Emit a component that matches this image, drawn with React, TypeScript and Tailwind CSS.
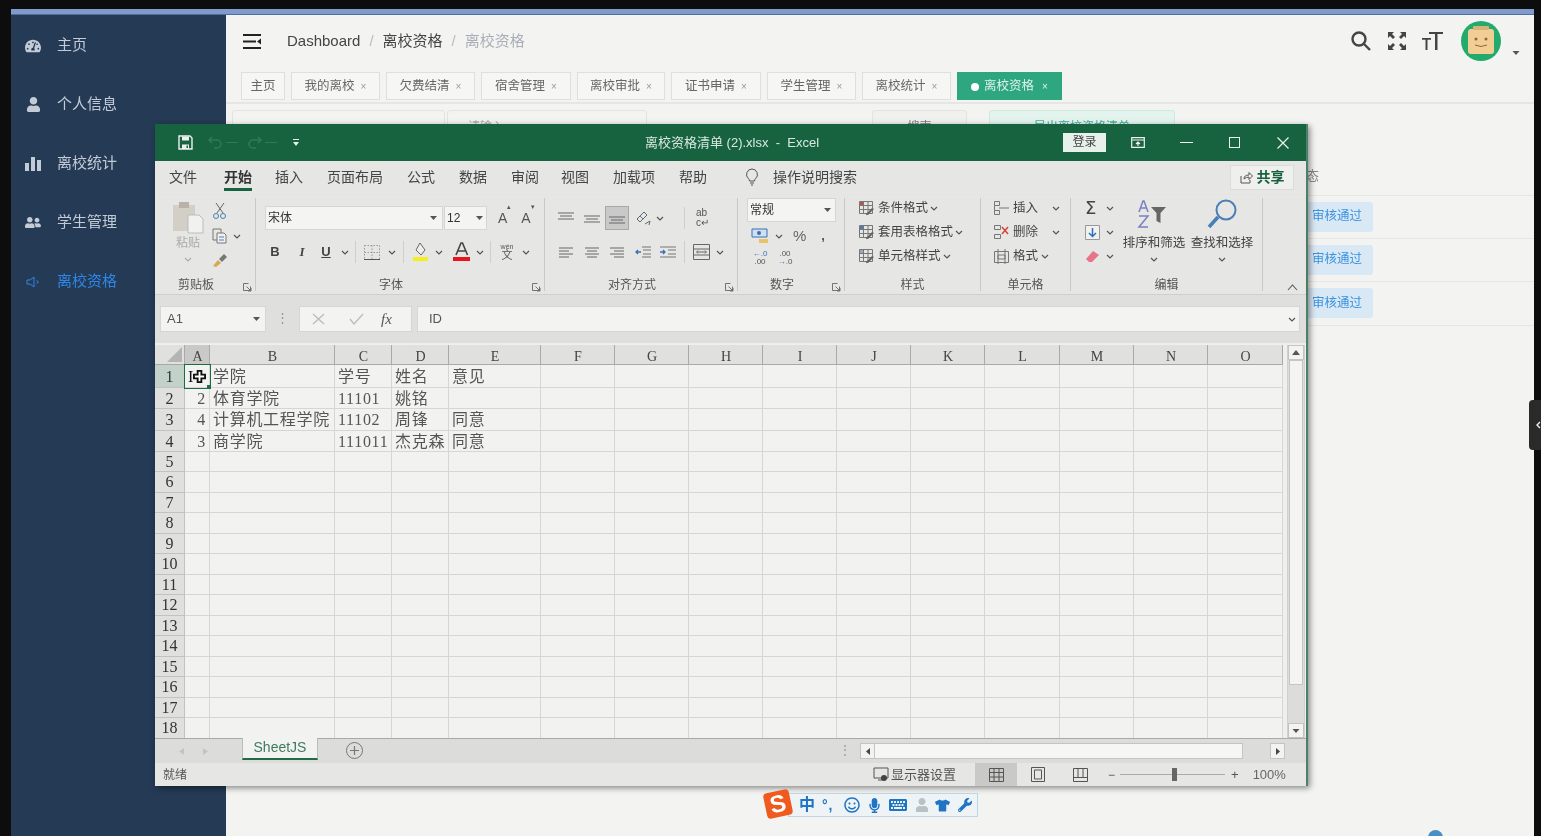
import React from 'react';
import { FaTachometerAlt, FaUser, FaUserFriends, FaMicrophone, FaKeyboard, FaTshirt, FaWrench, FaRegSmile } from 'react-icons/fa';

const Chev = ({ className = '' }: { className?: string }) => (
  <svg width="8" height="5" viewBox="0 0 8 5" className={`shrink-0 ${className}`} fill="none" stroke="#555" strokeWidth="1.2"><path d="M1 1l3 3 3-3" /></svg>
);
const Caret = ({ className = '' }: { className?: string }) => (
  <svg width="7" height="4" viewBox="0 0 7 4" className={`shrink-0 ${className}`} fill="#555"><path d="M0 0h7L3.5 4z" /></svg>
);
const Ic = ({ w = 16, h = 16, children, className = '' }: { w?: number; h?: number; children: React.ReactNode; className?: string }) => (
  <svg width={w} height={h} viewBox={`0 0 ${w} ${h}`} fill="none" className={`shrink-0 ${className}`}>{children}</svg>
);
const Launcher = () => (
  <Ic w={9} h={9}><path d="M.5 .5h5M.5 .5v7h7v-4M3.5 3.5l4 4M8 5v3H5" stroke="#666" strokeWidth=".9" /></Ic>
);
const Lines = ({ ys, xs }: { ys: number[]; xs: [number, number][] }) => (
  <Ic w={16} h={14}>
    {ys.map((y, i) => <path key={i} d={`M${xs[i][0]} ${y}H${xs[i][1]}`} stroke="#666" strokeWidth="1" />)}
  </Ic>
);
const VSep = () => <div className="w-px h-[22px] bg-[#cfcfcf] shrink-0" />;

const nav = [
  { t: '主页', i: <FaTachometerAlt size={16} /> },
  { t: '个人信息', i: <FaUser size={15} /> },
  {
    t: '离校统计',
    i: <svg width="16" height="16" viewBox="0 0 16 16" fill="currentColor"><path d="M0 7h4v8H0zM6 1h4v14H6zM12 4h4v11h-4z" /></svg>,
  },
  { t: '学生管理', i: <FaUserFriends size={17} /> },
  {
    t: '离校资格',
    i: <svg width="14" height="14" viewBox="0 0 14 14" fill="none" stroke="currentColor"><path d="M1 5h3l4-3v10L4 9H1zM10.500 5.500l2 1.500-2 1.500" /></svg>,
    active: true,
  },
];
const tags: [string, string][] = [
  ['主页', 'w-[44px]'], ['我的离校', 'w-[89px]'], ['欠费结清', 'w-[89px]'], ['宿舍管理', 'w-[90px]'], ['离校审批', 'w-[88px]'],
  ['证书申请', 'w-[90px]'], ['学生管理', 'w-[89px]'], ['离校统计', 'w-[89px]'],
];
const tabs = ['文件', '开始', '插入', '页面布局', '公式', '数据', '审阅', '视图', '加载项', '帮助'];
const cols = ['A', 'B', 'C', 'D', 'E', 'F', 'G', 'H', 'I', 'J', 'K', 'L', 'M', 'N', 'O'];
const cells: Record<string, string> = {
  A1: 'I', B1: '学院', C1: '学号', D1: '姓名', E1: '意见',
  A2: '2', B2: '体育学院', C2: '11101', D2: '姚铭',
  A3: '4', B3: '计算机工程学院', C3: '11102', D3: '周锋', E3: '同意',
  A4: '3', B4: '商学院', C4: '111011', D4: '杰克森', E4: '同意',
};
const rows = Array.from({ length: 18 }, (_, i) => i + 1);

const Group = ({ w, label, launcher, children }: { w: string; label: string; launcher?: boolean; children: React.ReactNode }) => (
  <div className={`${w} shrink-0 flex flex-col border-r border-[#c9c9c9]`}>
    <div className="h-[79px] shrink-0">{children}</div>
    <div className={`h-[15px] flex items-center text-[12px] text-[#555] relative ${launcher ? 'pr-[18px]' : ''}`}>
      <span className="flex-1 text-center">{label}</span>
      {launcher && <span className="absolute right-[3px] top-[6px]"><Launcher /></span>}
    </div>
  </div>
);

const SmallTable = ({ c = '#4a7fb5' }: { c?: string }) => (
  <Ic w={17} h={16}>
    <path d="M1.500 1.500h13v12h-13zM1.500 5.500h13M1.500 9.500h13M5.500 1.500v12M10 1.500v12" stroke="#777" />
    <path d="M2 2h3v3H2z" fill={c} />
    <path d="M8 14l6-6 2 1-6 6H8z" fill="#666" />
  </Ic>
);

export default function App() {
  return (
    <div className="w-[1541px] h-[836px] bg-[#0d0d0d] flex flex-col relative overflow-hidden font-['Liberation_Sans','Noto_Sans_CJK_SC',sans-serif] blur-[0.5px]">
      <div className="h-[9px] shrink-0" />
      <div className="flex-1 min-h-0 pl-[11px] pr-[7px] flex flex-col">
        <div className="h-[6px] shrink-0 bg-[#7f9acb] border-b border-[#4f6f9f]" />
        <div className="flex-1 min-h-0 flex">
          {/* sidebar */}
          <aside className="w-[215px] shrink-0 bg-[#243a55] flex flex-col pt-[1px]">
            {nav.map(n => (
              <div key={n.t} className={`h-[59px] shrink-0 flex items-center pl-[14px] ${n.active ? 'text-[#2e86e8]' : 'text-[#c3ccd6]'}`}>
                <span className="w-[16px] flex justify-center">{n.i}</span>
                <span className="ml-[16px] text-[15px]">{n.t}</span>
              </div>
            ))}
          </aside>
          {/* main */}
          <main className="flex-1 min-w-0 bg-[#f3f4f2] flex flex-col">
            <header className="h-[55px] shrink-0 flex items-center pl-[17px] pr-[14px]">
              <svg width="18" height="15" viewBox="0 0 18 15" fill="#222" className="shrink-0 -mt-[3px]"><path d="M0 0h18v2H0zM0 6.500h13v2H0zM0 13h18v2H0zM18 4.500v6l-4-3z" /></svg>
              <div className="ml-[26px] -mt-[2px] flex items-center text-[15px] text-[#444]">
                <span>Dashboard</span>
                <span className="mx-[9px] text-[#bbb]">/</span>
                <span>离校资格</span>
                <span className="mx-[9px] text-[#bbb]">/</span>
                <span className="text-[#a9adb8]">离校资格</span>
              </div>
              <div className="ml-auto -mt-[4px] flex items-center text-[#444]">
                <svg width="20" height="20" viewBox="0 0 20 20" fill="none" stroke="#444" strokeWidth="2.400"><circle cx="8" cy="8" r="6.500" /><path d="M13 13l6 6" /></svg>
                <svg width="20" height="20" viewBox="0 0 20 20" fill="#444" className="ml-[16px]"><path d="M1 1h6L5 3l3 3-2 2-3-3-2 2zM19 1v6l-2-2-3 3-2-2 3-3-2-2zM1 19v-6l2 2 3-3 2 2-3 3 2 2zM19 19h-6l2-2-3-3 2-2 3 3 2-2z" /></svg>
                <svg width="21" height="20" viewBox="0 0 21 20" fill="#444" className="ml-[15px]"><path d="M7 1h14v2H15.500V19h-2.500V3H7zM0 7h9v1.800H5.500V19H3.500V8.800H0z" /></svg>
                <svg width="40" height="40" viewBox="0 0 40 40" className="ml-[18px]">
                  <circle cx="20" cy="20" r="20" fill="#22ab6d" />
                  <rect x="7" y="8" width="26" height="25" rx="3" fill="#f2cd94" />
                  <rect x="12" y="5" width="16" height="4" rx="1" fill="#d8b27b" />
                  <circle cx="15" cy="18" r="1.500" fill="#8a6a3a" /><circle cx="25" cy="18" r="1.500" fill="#8a6a3a" />
                  <path d="M14 24q6 3 12 0" stroke="#8a6a3a" fill="none" />
                </svg>
                <Caret className="ml-[11px] mt-[24px] w-[8px]" />
              </div>
            </header>
            <nav className="h-[34px] shrink-0 flex items-start pl-[15px] gap-[6px] pt-[2px] border-b-2 border-[#e6e7e5]">
              {tags.map(([t, w], i) => (
                <div key={t} className={`h-[28px] ${w} flex items-center justify-center gap-[6px] pt-[1px] border border-[#dfe0de] text-[12.5px] text-[#666] bg-[#f6f6f5]`}>
                  <span>{t}</span>
                  {i > 0 && <span className="text-[10px] text-[#999]">×</span>}
                </div>
              ))}
              <div className="h-[28px] w-[105px] flex items-center justify-center pt-[1px] bg-[#2ea67f] text-white text-[12.5px]">
                <span className="w-[8px] h-[8px] rounded-full bg-white mr-[5px]" />
                <span className="text-[#dff2ea]">离校资格</span>
                <span className="ml-[8px] text-[10px] text-[#dff2ea]">×</span>
              </div>
            </nav>
            <section className="flex-1 min-h-0 flex flex-col">
              <div className="h-[40px] shrink-0 pt-[6px] flex items-start text-[12px] text-[#aaa]">
                <div className="ml-[6px] w-[213px] h-[30px] border border-[#e3e4e2] rounded-[3px]" />
                <div className="ml-[2px] w-[200px] h-[30px] border border-[#e3e4e2] rounded-[3px] pl-[20px] pt-[7px]">请输入</div>
                <div className="ml-[225px] w-[95px] h-[30px] border border-[#e3e4e2] rounded-[3px] bg-[#f0f0ef] text-center pt-[7px] text-[#777]">搜索</div>
                <div className="ml-[22px] w-[186px] h-[30px] border border-[#cfe9df] rounded-[3px] bg-[#e3f3ee] text-center pt-[7px] text-[#4a9]">导出离校资格清单</div>
              </div>
              <div className="ml-[1067px]">
                <div className="h-[51px] flex items-end pb-[10px] text-[13px] text-[#888]">状态</div>
              </div>
              {[0, 1, 2].map(i => (
                <div key={i} className={`h-[43.500px] shrink-0 flex items-center pl-[1079px] border-b border-[#e6e7e5] ${i === 0 ? 'border-t' : ''}`}>
                  <span className="w-[68px] h-[30px] rounded-[3px] bg-[#d9e8f5] text-[#3b92e0] text-[12.5px] flex items-center pl-[7px]">审核通过</span>
                </div>
              ))}
            </section>
          </main>
        </div>
      </div>

      {/* side handle + bottom dot */}
      <div className="absolute right-0 top-[400px] w-[12px] h-[50px] rounded-l-[4px] bg-[#2a2a2a] flex items-center justify-end">
        <svg width="6" height="8" viewBox="0 0 6 8" fill="none" stroke="#eee" strokeWidth="1.400"><path d="M5 1L2 4l3 3" /></svg>
      </div>
      <div className="absolute left-[1428px] top-[830px] w-[15px] h-[15px] rounded-full bg-[#4a90c8]" />

      {/* Excel window */}
      <div className="absolute left-[155px] top-[124px] w-[1153px] h-[662px] bg-[#e6e6e5] flex flex-col shadow-[2px_2px_6px_rgba(0,0,0,0.45)] text-[#444] border-r-2 border-b border-[#4d8068]">
        {/* title bar */}
        <div className="h-[37px] shrink-0 bg-[#17633f] flex items-center relative text-[#e6efe9]">
          <Ic w={15} h={15} className="ml-[23px]"><path d="M1 1h11l2 2v11H1z" stroke="#f0f0f0" strokeWidth="1.400" /><path d="M4 1.500h7v4H4zM4 9.500h7V14H4z" fill="#f0f0f0" /><path d="M8.500 10.500h1.500v2.500H8.500z" fill="#17633f" /></Ic>
          <Ic w={15} h={13} className="ml-[15px]"><path d="M4 1L1 4l3 3M1 4h8a4 4 0 010 8H6" stroke="#2f7a57" strokeWidth="1.500" /></Ic>
          <div className="w-[12px] h-px bg-[#2f7a57] ml-[3px]" />
          <Ic w={15} h={13} className="ml-[9px]"><path d="M11 1l3 3-3 3M14 4H6a4 4 0 000 8h3" stroke="#2f7a57" strokeWidth="1.500" /></Ic>
          <div className="w-[12px] h-px bg-[#2f7a57] ml-[3px]" />
          <svg width="6" height="7" viewBox="0 0 6 7" fill="#e6efe9" className="ml-[16px]"><path d="M0 0h6v1H0zM0 3h6L3 7z" /></svg>
          <span className="ml-[346px] text-[13px] whitespace-pre text-[#dbe8e1]">离校资格清单 (2).xlsx  -  Excel</span>
          <button className="ml-[244px] w-[43px] h-[19px] bg-[#e8f0ec] text-[#444] text-[12px] leading-[19px] text-center">登录</button>
          <Ic w={14} h={11} className="ml-[25px]"><path d="M.700 .700h12.600v9.600H.700zM.700 3h12.600M7 9V5M5 7l2-2 2 2" stroke="#f0f0f0" strokeWidth="1.200" /></Ic>
          <div className="ml-[35px] w-[13px] h-px bg-[#f0f0f0]" />
          <div className="ml-[36px] w-[11px] h-[11px] border border-[#f0f0f0]" />
          <Ic w={12} h={12} className="ml-[37px]"><path d="M.5 .5l11 11M11.500 .5l-11 11" stroke="#f0f0f0" strokeWidth="1.200" /></Ic>
        </div>

        {/* tabs */}
        <div className="h-[34px] shrink-0 flex items-center pl-[14px] pb-[2px] text-[14px] bg-[#e6e6e5]">
          <div className="flex gap-[24px]">
            {tabs.map(t => (
              <span key={t} className={`relative ${t === '开始' ? 'font-bold text-[#333] ml-[1px] -mr-[1px]' : ''} ${t === '文件' ? 'mr-[2px]' : ''} ${t === '视图' ? '-ml-[2px]' : ''}`}>
                {t}
                {t === '开始' && <span className="absolute left-0 right-0 -bottom-[3px] h-[3px] bg-[#17633f]" />}
              </span>
            ))}
          </div>
          <Ic w={14} h={18} className="ml-[38px]"><path d="M7 1a5.500 5.500 0 013.500 9.700c-.6.6-1 1.300-1 2.300h-5c0-1-.4-1.700-1-2.300A5.500 5.500 0 017 1zM5 15h4M6 17h2" stroke="#555" /></Ic>
          <span className="ml-[14px]">操作说明搜索</span>
          <div className="ml-auto mr-[12px] w-[64px] h-[25px] bg-[#efefee] border border-[#dcdcdc] flex items-center justify-center">
            <Ic w={13} h={13}><path d="M1 5v7h9V9M4 8q0-4 5-4V1.500L12.500 5 9 8.500V6q-3 0-5 2z" stroke="#555" /></Ic>
            <span className="ml-[4px] font-bold text-[#17633f] text-[14px]">共享</span>
          </div>
        </div>

        {/* ribbon */}
        <div className="h-[100px] shrink-0 flex py-[3px] bg-[#e6e6e5] border-b border-[#cfcfcf] shadow-[0_1px_2px_rgba(0,0,0,0.15)]">
          <Group w="w-[101px]" label="剪贴板" launcher>
            <div className="flex pl-[15px]">
              <div className="w-[36px] flex flex-col items-center pt-[2px]">
                <Ic w={34} h={34}>
                  <path d="M2 5h22v26H2z" fill="#d4cfc6" /><path d="M8 2h10v6H8z" fill="#b8b2a8" />
                  <path d="M17 15h11l4 4v14H17z" fill="#f1f1ef" stroke="#bbb" />
                </Ic>
                <span className="text-[12px] text-[#aaa] leading-[16px] mt-[1px]">粘贴</span>
                <Chev className="mt-[6px] opacity-40" />
              </div>
              <div className="ml-[6px] flex flex-col pt-[5px] gap-[9px]">
                <Ic w={16} h={16}><path d="M4 0l7 10M12 0L5 10" stroke="#666" /><circle cx="4" cy="13" r="2.500" stroke="#4a7fb5" /><circle cx="11" cy="13" r="2.500" stroke="#4a7fb5" /></Ic>
                <div className="flex items-center gap-[5px]">
                  <Ic w={16} h={16}><path d="M1 1h8v11H1z" stroke="#777" /><path d="M5 5h7l2 2v8H5z" fill="#f1f1ef" stroke="#777" /><path d="M7 9h5M7 12h5" stroke="#4a7fb5" /></Ic>
                  <Chev />
                </div>
                <Ic w={16} h={14}><path d="M1 13l5-6 3 3-5 4z" fill="#d9a94f" /><path d="M7 6l5-5 3 3-5 5z" fill="#777" /></Ic>
              </div>
            </div>
          </Group>

          <Group w="w-[289px]" label="字体" launcher>
            <div className="pl-[9px] pt-[8px]">
              <div className="flex items-center">
                <div className="w-[178px] h-[24px] bg-[#f4f4f3] border border-[#d6d6d6] flex items-center pl-[2px] pr-[5px] text-[12px] text-[#333]">
                  <span>宋体</span><Caret className="ml-auto" />
                </div>
                <div className="ml-px w-[43px] h-[24px] bg-[#f4f4f3] border border-[#d6d6d6] flex items-center pl-[2px] pr-[3px] text-[12px] text-[#333]">
                  <span>12</span><Caret className="ml-auto" />
                </div>
                <span className="ml-[11px] text-[14px] text-[#555] relative">A<sup className="text-[7px] absolute -top-[1px] -right-[4px]">▴</sup></span>
                <span className="ml-[14px] text-[14px] text-[#555] relative">A<sup className="text-[7px] absolute -top-[1px] -right-[4px]">▾</sup></span>
              </div>
              <div className="flex items-center mt-[10px] h-[24px]">
                <span className="w-[20px] text-center text-[13px] font-bold text-[#444]">B</span>
                <span className="ml-[7px] w-[20px] text-center text-[13px] italic font-bold font-['Liberation_Serif'] text-[#444]">I</span>
                <span className="ml-[4px] w-[20px] text-center text-[13px] font-bold underline text-[#444]">U</span>
                <Chev className="ml-[5px]" />
                <div className="ml-[6px]"><VSep /></div>
                <Ic w={16} h={15} className="ml-[8px]"><path d="M.5 .5h15v14H.5zM.5 7.500h15M8 .5v14" stroke="#999" strokeDasharray="1.500 1.500" /><path d="M0 14.500h16" stroke="#555" /></Ic>
                <Chev className="ml-[8px]" />
                <div className="ml-[7px]"><VSep /></div>
                <Ic w={17} h={20} className="ml-[8px]"><path d="M8 1l5 7-4 5-5-5z" stroke="#666" fill="#eee" /><path d="M1 15h15v4H1z" fill="#f6ee1e" /></Ic>
                <Chev className="ml-[6px]" />
                <Ic w={17} h={20} className="ml-[10px]"><path d="M3 13L8 1h1.500l5 12M5 9h7" stroke="#444" strokeWidth="1.600" /><path d="M0 15h17v4H0z" fill="#e8141c" /></Ic>
                <Chev className="ml-[6px]" />
                <div className="ml-[6px]"><VSep /></div>
                <span className="ml-[8px] w-[16px] flex flex-col items-center leading-none text-[#555]"><span className="text-[7px]">wén</span><span className="text-[11px]">文</span></span>
                <Chev className="ml-[7px]" />
              </div>
            </div>
          </Group>

          <Group w="w-[193px]" label="对齐方式" launcher>
            <div className="pl-[13px] pt-[8px]">
              <div className="flex items-center h-[24px]">
                <Lines ys={[2, 5, 8]} xs={[[0, 16], [2, 14], [0, 16]]} />
                <span className="ml-[10px]"><Lines ys={[5, 8, 11]} xs={[[0, 16], [2, 14], [0, 16]]} /></span>
                <div className="ml-[5px] w-[24px] h-[24px] bg-[#c9c9c9] border border-[#a8a8a8] flex items-center justify-center"><Lines ys={[6, 9, 12]} xs={[[0, 16], [2, 14], [0, 16]]} /></div>
                <Ic w={16} h={15} className="ml-[7px]"><path d="M1 8l7-7 3 3-7 7zM9 13l5-3-1 4" stroke="#666" /><path d="M4 5l3 3" stroke="#4a7fb5" /></Ic>
                <Chev className="ml-[4px]" />
                <div className="ml-[20px]"><VSep /></div>
                <span className="ml-[11px] text-[10px] leading-[10px] text-[#555] w-[16px]">ab<br />c↵</span>
              </div>
              <div className="flex items-center h-[24px] mt-[10px]">
                <Lines ys={[3, 6, 9, 12]} xs={[[1, 15], [1, 11], [1, 15], [1, 11]]} />
                <span className="ml-[10px]"><Lines ys={[3, 6, 9, 12]} xs={[[1, 15], [3, 13], [1, 15], [3, 13]]} /></span>
                <span className="ml-[9px]"><Lines ys={[3, 6, 9, 12]} xs={[[1, 15], [5, 15], [1, 15], [5, 15]]} /></span>
                <Ic w={16} h={14} className="ml-[10px]"><path d="M7 2h9M7 12h9M8 5h8M8 9h8" stroke="#777" /><path d="M6 7H1M3 5L1 7l2 2" stroke="#3a6fb5" strokeWidth="1.300" /></Ic>
                <Ic w={16} h={14} className="ml-[9px]"><path d="M0 2h16M0 12h16M8 5h8M8 9h8" stroke="#777" /><path d="M0 7h5M3 5l2 2-2 2" stroke="#3a6fb5" strokeWidth="1.300" /></Ic>
                <div className="ml-[8px]"><VSep /></div>
                <Ic w={17} h={16} className="ml-[8px]"><path d="M.5 .5h16v15H.5zM.5 5h16M.5 11h16M4 8h9M5 6.500L3.500 8 5 9.500M12 6.500L13.500 8 12 9.500" stroke="#666" /></Ic>
                <Chev className="ml-[6px]" />
              </div>
            </div>
          </Group>

          <Group w="w-[107px]" label="数字" launcher>
            <div className="pl-[9px]">
              <div className="w-[89px] h-[24px] bg-[#f4f4f3] border border-[#d6d6d6] flex items-center pl-[2px] pr-[4px] text-[12px] text-[#333]">
                <span>常规</span><Caret className="ml-auto" />
              </div>
              <div className="flex items-center h-[24px] mt-[2px] pl-[4px]">
                <Ic w={18} h={16}><path d="M1 1h15v8H1z" fill="#cfe0f0" stroke="#3a6fb5" /><circle cx="8" cy="5" r="2" fill="#3a6fb5" /><path d="M8 11h9v4H8z" fill="#e8c36a" /></Ic>
                <Chev className="ml-[6px]" />
                <span className="ml-[10px] text-[15px] text-[#666]">%</span>
                <span className="ml-[15px] text-[13px] font-bold text-[#555]">,</span>
              </div>
              <div className="flex items-center pl-[4px] mt-[2px] gap-[7px]">
                {['←.0', '.00'].map((a, i) => (
                  <span key={a} className="w-[18px] text-[8px] leading-[8px] text-center text-[#555]">
                    <span className={i === 0 ? 'text-[#3a6fb5]' : ''}>{a}</span><br />{i === 0 ? '.00' : <span><span className="text-[#3a6fb5]">→</span>.0</span>}
                  </span>
                ))}
              </div>
            </div>
          </Group>

          <Group w="w-[136px]" label="样式">
            <div className="pl-[13px] pt-[1px] flex flex-col gap-[6px] text-[12.5px]">
              <div className="h-[18px] flex items-center"><SmallTable c="#c0504d" /><span className="ml-[3px]">条件格式</span><Chev className="ml-[2px]" /></div>
              <div className="h-[18px] flex items-center"><SmallTable /><span className="ml-[3px]">套用表格格式</span><Chev className="ml-[2px]" /></div>
              <div className="h-[18px] flex items-center"><SmallTable c="#9ab" /><span className="ml-[3px]">单元格样式</span><Chev className="ml-[2px]" /></div>
            </div>
          </Group>

          <Group w="w-[90px]" label="单元格">
            <div className="pl-[12px] pt-[1px] flex flex-col gap-[6px] text-[12.5px]">
              <div className="h-[18px] flex items-center w-[67px]"><Ic w={17} h={16}><path d="M1.500 1.500h5v4h-5zM1.500 10.500h5v4h-5zM1.500 5.500v5M6 8h10" stroke="#777" /></Ic><span className="ml-[3px]">插入</span><Chev className="ml-auto" /></div>
              <div className="h-[18px] flex items-center w-[67px]"><Ic w={17} h={16}><path d="M1.500 1.500h6v4h-6zM1.500 10.500h6v4h-6z" stroke="#777" /><path d="M9 3l6 7M15 3l-6 7" stroke="#d9433a" strokeWidth="1.500" /></Ic><span className="ml-[3px]">删除</span><Chev className="ml-auto" /></div>
              <div className="h-[18px] flex items-center"><Ic w={17} h={16}><path d="M1.500 3.500h14v11h-14zM5 1v15M12 1v15M5 7h7v4H5z" stroke="#777" /></Ic><span className="ml-[3px]">格式</span><Chev className="ml-[3px]" /></div>
            </div>
          </Group>

          <Group w="w-[192px]" label="编辑">
            <div className="flex pl-[14px]">
              <div className="w-[37px] flex flex-col gap-[6px] pt-[1px]">
                <div className="h-[18px] flex items-center"><span className="w-[14px] text-[18px] leading-none font-['DejaVu_Sans'] text-[#444]">Σ</span><Chev className="ml-[7px]" /></div>
                <div className="h-[18px] flex items-center"><Ic w={15} h={15}><path d="M.5 .5h14v14H.5z" stroke="#999" fill="#f1f1ef" /><path d="M7.500 3v8M4 8l3.500 3.500L11 8" stroke="#2f6fc0" strokeWidth="1.500" /></Ic><Chev className="ml-[6px]" /></div>
                <div className="h-[18px] flex items-center"><Ic w={15} h={13}><path d="M1 9l7-8 6 4-7 7H4z" fill="#e8748a" /></Ic><Chev className="ml-[6px]" /></div>
              </div>
              <div className="w-[64px] flex flex-col items-center">
                <Ic w={34} h={30}>
                  <path d="M2 14L6 3h1l4 11M4 10h5M2 18h9L2 29h9" stroke="#7a7fc4" strokeWidth="1.500" />
                  <path d="M14 9h15l-5.500 6v10l-4-2v-8z" fill="#666" />
                </Ic>
                <span className="text-[12.500px] leading-[16px] mt-[7px] whitespace-nowrap">排序和筛选</span>
                <Chev className="mt-[6px]" />
              </div>
              <div className="ml-[4px] w-[64px] flex flex-col items-center">
                <Ic w={34} h={32}><circle cx="21" cy="12" r="9.500" stroke="#4a7fb5" strokeWidth="2" /><path d="M13 19L4 29" stroke="#4a7fb5" strokeWidth="3.500" /></Ic>
                <span className="text-[12.500px] leading-[16px] mt-[5px] whitespace-nowrap">查找和选择</span>
                <Chev className="mt-[6px]" />
              </div>
            </div>
          </Group>

          <div className="flex-1 flex items-end justify-end pr-[8px]">
            <svg width="11" height="7" viewBox="0 0 11 7" fill="none" stroke="#555" strokeWidth="1.100"><path d="M1 6l4.500-5L10 6" /></svg>
          </div>
        </div>

        {/* formula bar */}
        <div className="h-[48px] shrink-0 bg-[#dfdfdd] flex items-start pt-[11px] pl-[5px] pr-[6px]">
          <div className="w-[106px] h-[26px] bg-[#f3f3f2] border border-[#d6d6d6] flex items-center pl-[6px] pr-[5px] text-[13px] text-[#555]">
            A1<Caret className="ml-auto" />
          </div>
          <span className="w-[33px] h-[26px] text-center leading-[24px] text-[#999] text-[13px]">⋮</span>
          <div className="w-[113px] h-[26px] bg-[#f3f3f2] border border-[#d6d6d6] flex items-center pl-[12px]">
            <Ic w={14} h={12}><path d="M1 1l11 10M12 1L1 11" stroke="#bbb" strokeWidth="1.300" /></Ic>
            <Ic w={15} h={12} className="ml-[23px]"><path d="M1 6l4 5 9-10" stroke="#bbb" strokeWidth="1.300" /></Ic>
            <span className="ml-[17px] text-[15px] italic font-['Liberation_Serif'] text-[#555]">fx</span>
          </div>
          <div className="ml-[5px] flex-1 h-[26px] bg-[#f3f3f2] border border-[#d6d6d6] flex items-center pl-[11px] pr-[3px] text-[13px] text-[#555]">
            ID<Chev className="ml-auto" />
          </div>
        </div>

        {/* sheet */}
        <div className="h-[395px] shrink-0 flex bg-[#eef0ee] pt-[2px]">
          <div className="grid w-[1128px] grid-cols-[30px_25px_125px_57px_57px_92px_74px_74px_74px_74px_74px_74px_75px_74px_74px_75px] grid-rows-[20px_23px_21px_22px_21px_20px_repeat(13,20.500px)] font-['Liberation_Serif','Noto_Sans_CJK_SC',serif] overflow-hidden">
            <div className="bg-[#e0e0de] border-b border-r border-[#a9a9a9] flex items-end justify-end pr-[2px] pb-[2px]">
              <svg width="15" height="15" viewBox="0 0 15 15" fill="#b4b4b4"><path d="M15 0v15H0z" /></svg>
            </div>
            {cols.map((c, i) => (
              <div key={c} className={`border-b border-r border-[#a9a9a9] flex items-center justify-center pt-[3px] pl-[1px] text-[14px] text-[#444] ${i === 0 ? 'bg-[#c9c9c7]' : 'bg-[#e0e0de]'}`}>{c}</div>
            ))}
            {rows.map(r => (
              <React.Fragment key={r}>
                <div className={`border-b border-r border-[#c2c2c2] flex items-center justify-center pt-[1px] text-[16px] text-[#333] ${r === 1 ? 'bg-[#c2d2c8]' : 'bg-[#e0e0de]'}`}>{r}</div>
                {cols.map((c, i) => {
                  const v = cells[`${c}${r}`];
                  const sel = c === 'A' && r === 1;
                  return (
                    <div
                      key={c}
                      className={`relative border-b border-r border-[#d6d7d5] bg-[#f2f3f1] flex items-center pt-[1px] text-[16px] tracking-[0.7px] whitespace-nowrap px-[3px] ${i === 0 && !sel ? 'justify-end' : ''} ${sel ? 'outline-[1.5px] outline-[#1f6b45] z-10 text-[#111]' : 'text-[#555]'}`}
                    >
                      {v}
                      {sel && (
                        <>
                          <svg width="13" height="13" viewBox="0 0 14 14" className="absolute left-[8px] top-[5px]"><path d="M5 1h4v4h4v4H9v4H5V9H1V5h4z" fill="#fff" stroke="#111" strokeWidth="2" /></svg>
                          <span className="absolute -right-[2px] -bottom-[2px] w-[4px] h-[4px] bg-[#1f6b45]" />
                        </>
                      )}
                    </div>
                  );
                })}
              </React.Fragment>
            ))}
          </div>
          <div className="ml-[4px] w-[18px] flex flex-col bg-[#dcdcda] border-x border-[#d0d0ce]">
            <div className="h-[15px] bg-[#f3f3f2] border border-[#c4c4c4] flex items-center justify-center">
              <svg width="8" height="5" viewBox="0 0 8 5" fill="#555"><path d="M4 0l4 5H0z" /></svg>
            </div>
            <div className="h-[325px] mx-[1px] bg-[#f4f4f3] border border-[#c4c4c4]" />
            <div className="flex-1" />
            <div className="h-[15px] bg-[#f3f3f2] border border-[#c4c4c4] flex items-center justify-center"><Caret className="w-[8px]" /></div>
          </div>
        </div>

        {/* sheet tabs */}
        <div className="h-[25px] shrink-0 bg-[#dcdcda] border-t border-[#a9a9a9] flex items-start text-[#888]">
          <Ic w={5} h={7} className="ml-[24px] mt-[9px]"><path d="M5 0v7L0 3.500z" fill="#c4c4c4" /></Ic>
          <Ic w={5} h={7} className="ml-[19px] mt-[9px]"><path d="M0 0v7l5-3.500z" fill="#c4c4c4" /></Ic>
          <div className="ml-[34px] w-[76px] h-[22px] -mt-px bg-[#f2f3f1] border-b-2 border-[#1f6b45] text-center text-[14px] leading-[18px] text-[#3f7a5e] border-x border-x-[#bbb]">SheetJS</div>
          <div className="ml-[28px] mt-[3px] w-[17px] h-[17px] rounded-full border border-[#777] flex items-center justify-center">
            <svg width="9" height="9" viewBox="0 0 9 9" stroke="#777" strokeWidth="1.200"><path d="M4.500 0v9M0 4.500h9" /></svg>
          </div>
          <span className="ml-[476px] mt-[3px] text-[12px] text-[#999] leading-[16px]">⋮</span>
          <div className="ml-[9px] mt-[4px] flex h-[16px]">
            <div className="w-[15px] bg-[#f3f3f2] border border-[#c4c4c4] flex items-center justify-center"><svg width="4" height="7" viewBox="0 0 4 7" fill="#444"><path d="M4 0v7L0 3.500z" /></svg></div>
            <div className="w-[368px] bg-[#f6f6f5] border-y border-r border-[#c4c4c4]" />
            <div className="w-[27px]" />
            <div className="w-[15px] bg-[#f3f3f2] border border-[#c4c4c4] flex items-center justify-center"><svg width="4" height="7" viewBox="0 0 4 7" fill="#444"><path d="M0 0v7l4-3.500z" /></svg></div>
          </div>
        </div>

        {/* status bar */}
        <div className="flex-1 bg-[#e6e6e5] flex items-center pl-[8px] text-[12px] text-[#555]">
          <span>就绪</span>
          <Ic w={16} h={15} className="ml-[686px]"><path d="M1 1h14v10H1zM5 13h5" stroke="#555" /><circle cx="11" cy="11" r="3" fill="#444" /></Ic>
          <span className="ml-[2px] text-[13px]">显示器设置</span>
          <div className="ml-[19px] w-[42px] h-[23px] bg-[#c9c9c7] flex items-center justify-center">
            <Ic w={15} h={14}><path d="M.5 .5h14v13H.5zM.5 4.500h14M.5 9h14M5 .5v13M10 .5v13" stroke="#555" /></Ic>
          </div>
          <Ic w={14} h={15} className="ml-[14px]"><path d="M.5 .5h13v14H.5zM3.500 3h7v9h-7z" stroke="#555" /></Ic>
          <Ic w={15} h={14} className="ml-[28px]"><path d="M.5 .5h14v13H.5zM.5 9.500h14M5 .5v9M10 .5v9" stroke="#555" /></Ic>
          <span className="ml-[20px] text-[12px]">−</span>
          <div className="ml-[5px] w-[105px] h-px bg-[#aaa] relative">
            <span className="absolute left-[52px] -top-[6px] w-[5px] h-[13px] bg-[#666]" />
          </div>
          <span className="ml-[6px] text-[13px]">+</span>
          <span className="ml-[14px] text-[13px] text-[#666]">100%</span>
        </div>
      </div>

      {/* IME toolbar */}
      <div className="absolute left-[765px] top-[790px] flex items-center">
        <div className="w-[26px] h-[26px] rounded-[4px] bg-[#ef5a1e] -rotate-12 flex items-center justify-center text-white font-black text-[24px] leading-none">S</div>
        <div className="-ml-[3px] w-[190px] h-[24px] mt-[3px] bg-[#eef4f5] border border-[#bcd6e6] flex items-center pl-[10px] text-[#1f74c4]">
          <span className="text-[16px] font-bold leading-none">中</span>
          <span className="ml-[7px] text-[14px] font-bold leading-none tracking-[1px]">°,</span>
          <FaRegSmile size={16} className="ml-[10px]" />
          <FaMicrophone size={15} className="ml-[7px]" />
          <FaKeyboard size={18} className="ml-[7px]" />
          <FaUser size={14} className="ml-[8px] text-[#b9c0c6]" />
          <FaTshirt size={15} className="ml-[6px]" />
          <FaWrench size={14} className="ml-[8px]" />
        </div>
      </div>
    </div>
  );
}
